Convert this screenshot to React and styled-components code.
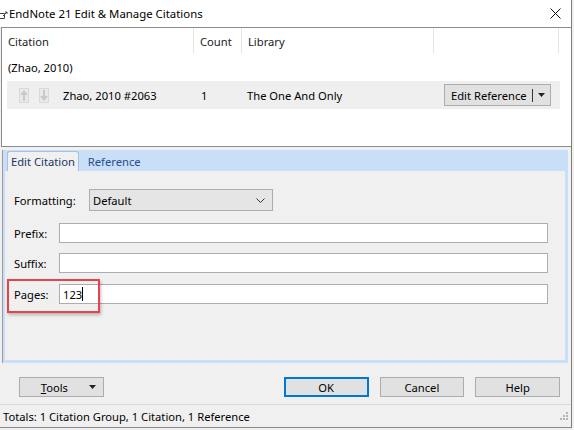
import React from "react";
import styled, { createGlobalStyle } from "styled-components";

const GlobalStyle = createGlobalStyle`
  html, body { margin: 0; padding: 0; background: #f0f0f0; overflow: hidden; }
  * { box-sizing: border-box; }
`;

const Window = styled.div`
  width: 572px;
  height: 428px;
  display: flex;
  flex-direction: column;
  background: #f0f0f0;
  border-right: 1px solid #7d7d7d;
  border-bottom: 1px solid #8a8a8a;
  font-family: "Noto Sans", "Open Sans", sans-serif;
  font-size: 11.2px;
  color: #000;
  white-space: nowrap;
`;

const TitleBar = styled.div`
  height: 27px;
  flex: none;
  display: flex;
  align-items: center;
  background: #fff;
  padding-right: 10px;
`;

const TitleText = styled.span`
  flex: 1;
  margin-left: 1px;
  font-size: 11.4px;
`;

const List = styled.div`
  height: 120px;
  flex: none;
  margin-left: 1px;
  background: #fff;
  border: 1px solid #8c8c8c;
  border-right: none;
`;

const Header = styled.div`
  height: 26px;
  display: grid;
  grid-template-columns: 192px 48px 192px 125px;
`;

const HeadCell = styled.div`
  display: flex;
  align-items: center;
  padding-left: ${(p) => p.$pad || 6}px;
  border-right: 1px solid #e6e6e6;
  color: #1a1a1a;
`;

const GroupRow = styled.div`
  height: 27px;
  display: flex;
  align-items: center;
  padding-left: 6px;
`;

const ItemRow = styled.div`
  height: 28px;
  margin-left: 5px;
  width: 553px;
  background: #efefef;
  display: grid;
  grid-template-columns: 187px 48px 192px 126px;
  align-items: center;
`;

const Cell = styled.div`
  display: flex;
  align-items: center;
  padding-left: ${(p) => p.$pad || 0}px;
`;

const MoveButton = styled.span`
  width: 10px;
  height: 15px;
  margin-right: ${(p) => p.$gap || 0}px;
  background: #e9e9e9;
  border: 1px solid #d9d9d9;
  display: flex;
  align-items: center;
  justify-content: center;
`;

const SplitButton = styled.div`
  width: 107px;
  height: 22px;
  background: #e1e1e1;
  border: 1px solid #adadad;
  display: flex;
  align-items: center;
  padding-left: 6px;
  gap: 5px;
`;

const Divider = styled.span`
  width: 1px;
  height: 13px;
  background: #333;
`;

const TabPanel = styled.div`
  height: 213px;
  flex: none;
  margin: 3px 3px 0 2px;
  display: flex;
  flex-direction: column;
  background: #c9def7;
  border-left: 1px solid #9a9a9a;
  padding: 0 3px 3px 2px;
`;

const TabStrip = styled.div`
  height: 21px;
  flex: none;
  display: flex;
  align-items: flex-end;
  padding-left: 2px;
  gap: 9px;
`;

const Tab = styled.div`
  height: ${(p) => (p.$active ? 20 : 19)}px;
  padding: 0 ${(p) => (p.$active ? 3 : 0)}px;
  display: flex;
  align-items: center;
  color: ${(p) => (p.$active ? "#1c3664" : "#264d8c")};
  background: ${(p) => (p.$active ? "#f0f0f0" : "transparent")};
  border: ${(p) => (p.$active ? "1px solid #a3c2e6" : "none")};
  border-bottom: none;
  border-radius: 3px 3px 0 0;
`;

const TabBody = styled.div`
  flex: 1;
  background: #f0f0f0;
  padding: 18px 17px 0 9px;
  display: flex;
  flex-direction: column;
  gap: 10px;
  position: relative;
`;

const FieldRow = styled.div`
  display: flex;
  align-items: center;
  margin-top: ${(p) => p.$top || 0}px;
`;

const Label = styled.span`
  width: ${(p) => p.$w}px;
  flex: none;
`;

const Select = styled.div`
  width: 184px;
  height: 22px;
  background: #e5e5e5;
  border: 1px solid #adadad;
  display: flex;
  align-items: center;
  justify-content: space-between;
  padding: 0 7px 0 3px;
`;

const TextBox = styled.div`
  flex: 1;
  height: 20px;
  background: #fff;
  border: 1px solid #abadb3;
  display: flex;
  align-items: center;
  padding-left: 3px;
`;

const Caret = styled.span`
  width: 1px;
  height: 14px;
  background: #000;
`;

const Highlight = styled.div`
  position: absolute;
  left: 2px;
  top: 108px;
  width: 93px;
  height: 34px;
  border: 2px solid #e8434c;
  box-shadow: 1px 2px 3px rgba(0, 0, 0, 0.25);
`;

const ButtonBar = styled.div`
  height: 41px;
  flex: none;
  display: flex;
  align-items: flex-start;
  padding: 14px 11px 0 19px;
`;

const Button = styled.div`
  width: ${(p) => p.$w || 85}px;
  height: 20px;
  margin-left: ${(p) => p.$ml || 0}px;
  background: #e1e1e1;
  border: ${(p) => (p.$default ? "2px solid #0078d7" : "1px solid #adadad")};
  display: flex;
  align-items: center;
  justify-content: center;
  position: relative;
`;

const DropArrow = styled.span`
  position: absolute;
  right: 7px;
  top: 50%;
  transform: translateY(-50%);
  display: flex;
`;

const StatusBar = styled.div`
  flex: 1;
  border-top: 1px solid #dadada;
  display: flex;
  align-items: center;
  justify-content: space-between;
  padding-left: 3px;
  padding-right: 3px;
`;

const ArrowUp = ({ down }) => (
  <svg width="8" height="11" viewBox="0 0 8 11">
    <path
      d={down ? "M3 0h2v6h3L4 11 0 6h3z" : "M3 11h2V5h3L4 0 0 5h3z"}
      fill="#c9c9c9"
    />
  </svg>
);

const SmallTriangle = () => (
  <svg width="7" height="4" viewBox="0 0 7 4">
    <path d="M0 0h7L3.5 4z" fill="#222" />
  </svg>
);

export default function App() {
  return (
    <>
      <GlobalStyle />
      <Window>
        <TitleBar>
          <svg width="8" height="14" viewBox="0 0 8 14">
            <path d="M0 6.5h4.5v5H0" fill="none" stroke="#444" />
            <path d="M3 9l4-4M5 5h2v2" fill="none" stroke="#444" />
          </svg>
          <TitleText>EndNote 21 Edit &amp; Manage Citations</TitleText>
          <svg width="11" height="11" viewBox="0 0 11 11">
            <path d="M0.5 0.5l10 10M10.5 0.5l-10 10" stroke="#111" strokeWidth="1" />
          </svg>
        </TitleBar>

        <List>
          <Header>
            <HeadCell>Citation</HeadCell>
            <HeadCell>Count</HeadCell>
            <HeadCell>Library</HeadCell>
            <HeadCell />
          </Header>
          <GroupRow>(Zhao, 2010)</GroupRow>
          <ItemRow>
            <Cell $pad={12}>
              <MoveButton $gap={10}>
                <ArrowUp />
              </MoveButton>
              <MoveButton $gap={14}>
                <ArrowUp down />
              </MoveButton>
              Zhao, 2010 #2063
            </Cell>
            <Cell $pad={7}>1</Cell>
            <Cell $pad={5}>The One And Only</Cell>
            <Cell $pad={10}>
              <SplitButton>
                Edit Reference
                <Divider />
                <SmallTriangle />
              </SplitButton>
            </Cell>
          </ItemRow>
        </List>

        <TabPanel>
          <TabStrip>
            <Tab $active>Edit Citation</Tab>
            <Tab>Reference</Tab>
          </TabStrip>
          <TabBody>
            <FieldRow>
              <Label $w={75}>Formatting:</Label>
              <Select>
                Default
                <svg width="9" height="5" viewBox="0 0 9 5">
                  <path d="M0.5 0.5l4 4 4-4" fill="none" stroke="#333" />
                </svg>
              </Select>
            </FieldRow>
            <FieldRow $top={2}>
              <Label $w={45}>Prefix:</Label>
              <TextBox />
            </FieldRow>
            <FieldRow>
              <Label $w={45}>Suffix:</Label>
              <TextBox />
            </FieldRow>
            <FieldRow $top={1}>
              <Label $w={45}>Pages:</Label>
              <TextBox>
                123
                <Caret />
              </TextBox>
            </FieldRow>
            <Highlight />
          </TabBody>
        </TabPanel>

        <ButtonBar>
          <Button $w={85}>
            <span style={{ marginRight: 14 }}>
              <u>T</u>ools
            </span>
            <DropArrow>
              <SmallTriangle />
            </DropArrow>
          </Button>
          <Button $ml={180} $default>
            OK
          </Button>
          <Button $ml={11}>Cancel</Button>
          <Button $ml={11}>Help</Button>
        </ButtonBar>

        <StatusBar>
          <span>Totals: 1 Citation Group, 1 Citation, 1 Reference</span>
          <svg width="8" height="8" viewBox="0 0 8 8">
            <g fill="#b5b5b5">
              <rect x="6" y="0" width="2" height="2" />
              <rect x="3" y="3" width="2" height="2" />
              <rect x="6" y="3" width="2" height="2" />
              <rect x="0" y="6" width="2" height="2" />
              <rect x="3" y="6" width="2" height="2" />
              <rect x="6" y="6" width="2" height="2" />
            </g>
          </svg>
        </StatusBar>
      </Window>
    </>
  );
}
